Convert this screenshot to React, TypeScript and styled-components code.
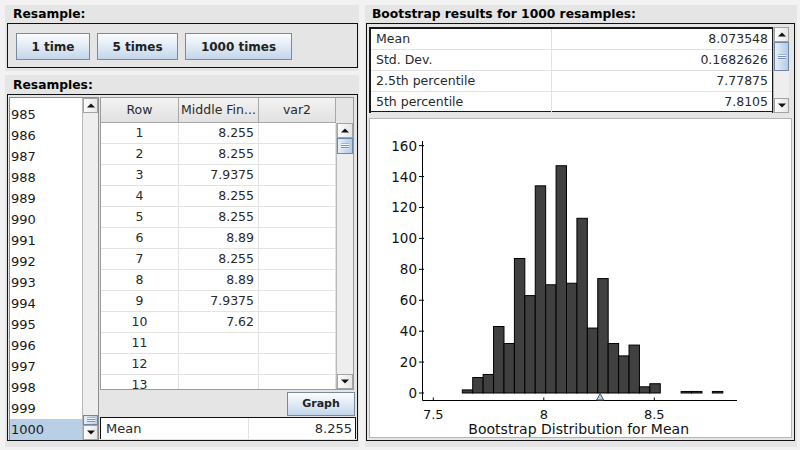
import React from "react";
import styled, { createGlobalStyle } from "styled-components";

const GlobalStyle = createGlobalStyle`
    html, body {
        margin: 0;
        padding: 0;
        background: #f2f2f2;
    }
    body {
        font-family: "DejaVu Sans", "Noto Sans", sans-serif;
        color: #000;
    }
`;

const Frame = styled.div`
    width: 800px;
    height: 450px;
    box-sizing: border-box;
    padding: 5px 3px 3px 5px;
    display: grid;
    grid-template-columns: 354px 432px;
    column-gap: 6px;
`;

const Column = styled.div`
    display: flex;
    flex-direction: column;
    gap: 4px;
    min-height: 0;
`;

const Panel = styled.section<{ $grow?: boolean; $padBottom: number; $padRight: number; $padLeft: number }>`
    background: #e5e5e5;
    display: flex;
    flex-direction: column;
    padding: 0 ${(p) => p.$padRight}px ${(p) => p.$padBottom}px ${(p) => p.$padLeft}px;
    flex: ${(p) => (p.$grow ? "1" : "none")};
    min-height: 0;
`;

const Title = styled.h2<{ $h: number }>`
    margin: 0;
    height: ${(p) => p.$h}px;
    line-height: ${(p) => p.$h + 1}px;
    padding-left: 6px;
    font-size: 12.3px;
    font-weight: bold;
`;

const ButtonBox = styled.div`
    border: 1px solid #111;
    padding: 9px 8px 7px 8px;
    display: flex;
    gap: 7px;
`;

const OceanButton = styled.button<{ $w: number; $h: number; $size: number }>`
    width: ${(p) => p.$w}px;
    height: ${(p) => p.$h}px;
    padding: 0;
    border: 1px solid #7a8a99;
    background: linear-gradient(#fbfcfe, #e3ecf6 45%, #c4d6ea);
    font-family: "DejaVu Sans", sans-serif;
    font-weight: bold;
    font-size: ${(p) => p.$size}px;
    color: #222;
`;

const ResampleBox = styled.div`
    flex: 1;
    min-height: 0;
    border: 1px solid #111;
    padding: 2px 1px 0 1px;
    display: grid;
    grid-template-columns: 90px 256px;
    column-gap: 1px;
`;

const ListPane = styled.div`
    border: 1px solid #8d8d8d;
    border-bottom: none;
    background: #fff;
    display: flex;
    min-height: 0;
`;

const ListItems = styled.div`
    flex: 1;
    display: flex;
    flex-direction: column;
    justify-content: flex-end;
    overflow: hidden;
`;

const ListItem = styled.div<{ $selected?: boolean }>`
    height: 21px;
    flex: none;
    line-height: 21px;
    padding-left: 1px;
    font-size: 13px;
    color: #1a1a1a;
    background: ${(p) => (p.$selected ? "#b8cfe5" : "transparent")};
`;

const ScrollWrap = styled.div<{ $w: number }>`
    width: ${(p) => p.$w}px;
    flex: none;
    display: flex;
    flex-direction: column;
    background: #eeeeee;
    border-left: 1px solid #b8b8b8;
`;

const ArrowBtn = styled.div`
    height: 15px;
    flex: none;
    box-sizing: border-box;
    border: 1px solid #a3a3a3;
    background: linear-gradient(to right, #fdfdfd, #e6e6e6);
    display: flex;
    align-items: center;
    justify-content: center;
`;

const Track = styled.div`
    flex: 1;
    position: relative;
`;

const Thumb = styled.div<{ $top?: number; $bottom?: number; $h: number }>`
    position: absolute;
    left: 0;
    right: 0;
    ${(p) => (p.$top !== undefined ? `top: ${p.$top}px;` : `bottom: ${p.$bottom}px;`)}
    height: ${(p) => p.$h}px;
    box-sizing: border-box;
    border: 1px solid #6f87a6;
    background: linear-gradient(to right, #e7eff8, #c9daee 55%, #b6cbe4);
    &::after {
        content: "";
        position: absolute;
        left: 50%;
        top: 50%;
        width: 8px;
        height: 5px;
        transform: translate(-50%, -50%);
        background: repeating-linear-gradient(to bottom, #6f8fc4 0 1px, #f4f8fc 1px 2px);
    }
`;

const Arrow = ({ down }: { down?: boolean }) => (
    <svg width="8" height="5" viewBox="0 0 8 5">
        <polygon points={down ? "0,0.5 8,0.5 4,4.5" : "0,4.5 8,4.5 4,0.5"} fill="#111" />
    </svg>
);

const ScrollBar = ({
    width,
    top,
    bottom,
    thumb,
}: {
    width: number;
    top?: number;
    bottom?: number;
    thumb: number;
}) => (
    <ScrollWrap $w={width}>
        <ArrowBtn>
            <Arrow />
        </ArrowBtn>
        <Track>
            <Thumb $top={top} $bottom={bottom} $h={thumb} />
        </Track>
        <ArrowBtn>
            <Arrow down />
        </ArrowBtn>
    </ScrollWrap>
);

const TableSide = styled.div`
    display: flex;
    flex-direction: column;
    min-height: 0;
`;

const DataTable = styled.div`
    height: 293px;
    flex: none;
    box-sizing: border-box;
    border: 1px solid #9a9a9a;
    background: #e5e5e5;
    display: flex;
    flex-direction: column;
    width: 254px;
`;

const HeaderRow = styled.div`
    height: 25px;
    flex: none;
    display: grid;
    grid-template-columns: 78px 80px 77px 1fr;
`;

const HeadCell = styled.div<{ $blank?: boolean }>`
    box-sizing: border-box;
    border-right: ${(p) => (p.$blank ? "none" : "1px solid #a8a8a8")};
    border-bottom: ${(p) => (p.$blank ? "none" : "1px solid #a8a8a8")};
    background: ${(p) => (p.$blank ? "#e5e5e5" : "linear-gradient(#f3f3f3, #e1e1e1)")};
    font-size: 12.5px;
    line-height: 24px;
    text-align: center;
    color: #2a2a2a;
    white-space: nowrap;
    overflow: hidden;
`;

const TableBody = styled.div`
    flex: 1;
    display: flex;
    min-height: 0;
`;

const Rows = styled.div`
    width: 235px;
    flex: none;
    background: #fff;
    overflow: hidden;
`;

const BodyRow = styled.div`
    height: 21px;
    display: grid;
    grid-template-columns: 78px 80px 77px;
`;

const Cell = styled.div<{ $align: "center" | "right" }>`
    box-sizing: border-box;
    border-right: 1px solid #e3e3e3;
    border-bottom: 1px solid #e3e3e3;
    font-size: 12.5px;
    line-height: 20px;
    text-align: ${(p) => p.$align};
    padding-right: ${(p) => (p.$align === "right" ? 4 : 0)}px;
    color: #2a2a2a;
`;

const GraphRow = styled.div`
    height: 27px;
    flex: none;
    display: flex;
    justify-content: flex-end;
    align-items: center;
    padding-right: 1px;
`;

const MeanBox = styled.div`
    height: 22px;
    box-sizing: border-box;
    border: 1px solid #111;
    border-bottom: none;
    background: #fff;
    display: grid;
    grid-template-columns: 148px 1fr;
    font-size: 13px;
    line-height: 21px;
    color: #2a2a2a;
`;

const MeanLabel = styled.div`
    padding-left: 5px;
    border-right: 1px solid #e3e3e3;
`;

const MeanValue = styled.div`
    text-align: right;
    padding-right: 3px;
`;

const ResultsBox = styled.div`
    flex: 1;
    border: 1px solid #111;
    padding: 3px 1px 2px 2px;
    display: flex;
    flex-direction: column;
    gap: 5px;
    min-height: 0;
`;

const StatsPane = styled.div`
    height: 86px;
    flex: none;
    display: flex;
    width: 420px;
`;

const StatsTable = styled.div`
    flex: 1;
    border: 2px solid #1a1a1a;
    border-right-width: 1px;
    background: #fff;
`;

const StatRow = styled.div`
    height: 21px;
    display: grid;
    grid-template-columns: 181px 1fr;
`;

const StatCell = styled.div<{ $right?: boolean }>`
    box-sizing: border-box;
    border-bottom: 1px solid #e3e3e3;
    border-right: ${(p) => (p.$right ? "none" : "1px solid #e3e3e3")};
    font-size: 12.5px;
    line-height: 20px;
    color: #2a2a2a;
    text-align: ${(p) => (p.$right ? "right" : "left")};
    padding: 0 4px 0 5px;
`;

const ChartPanel = styled.div`
    flex: 1;
    border: 1px solid #b5b5b5;
    background: #fff;
    min-height: 0;
    width: 421px;
`;

const rowsData = ["8.255", "8.255", "7.9375", "8.255", "8.255", "8.89", "8.255", "8.89", "7.9375", "7.62", "", "", ""];
const listData = Array.from({ length: 16 }, (_, i) => 985 + i);
const stats = [
    ["Mean", "8.073548"],
    ["Std. Dev.", "0.1682626"],
    ["2.5th percentile", "7.77875"],
    ["5th percentile", "7.8105"],
];
const counts = [2, 10, 12, 43, 32, 87, 63, 134, 70, 147, 71, 113, 42, 74, 32, 24, 31, 4, 6, 0, 0, 1, 1, 0, 1];

// chart geometry, in px of the white panel
const X0 = 63.3;
const PX_PER_UNIT = 221;
const BASE = 274;
const PX_PER_COUNT = 1.546;
const AXIS_Y = 281.5;
const AXIS_X = 52.5;
const xOf = (v: number) => X0 + (v - 7.5) * PX_PER_UNIT;
const yOf = (c: number) => BASE - c * PX_PER_COUNT;

const Histogram = () => (
    <svg width="421" height="319" viewBox="0 0 421 319" fontFamily="DejaVu Sans, sans-serif">
        {counts.map((c, i) =>
            c > 0 ? (
                <rect
                    key={i}
                    x={92.3 + i * 10.42}
                    y={yOf(c)}
                    width={10.42}
                    height={c * PX_PER_COUNT}
                    fill="#404040"
                    stroke="#000"
                    strokeWidth="1"
                />
            ) : null
        )}
        <line x1={AXIS_X} y1={22} x2={AXIS_X} y2={AXIS_Y} stroke="#000" />
        <line x1={AXIS_X} y1={AXIS_Y} x2={367} y2={AXIS_Y} stroke="#000" />
        {[0, 20, 40, 60, 80, 100, 120, 140, 160].map((v) => (
            <g key={v}>
                <line x1={49} y1={yOf(v)} x2={54} y2={yOf(v)} stroke="#000" />
                <text x={47} y={yOf(v) + 5} fontSize="13.5" textAnchor="end" fill="#111">
                    {v}
                </text>
            </g>
        ))}
        {[7.5, 8, 8.5].map((v) => (
            <g key={v}>
                <line x1={xOf(v)} y1={AXIS_Y - 3} x2={xOf(v)} y2={AXIS_Y} stroke="#000" />
                <text x={xOf(v)} y={299.5} fontSize="13" textAnchor="middle" fill="#111">
                    {v}
                </text>
            </g>
        ))}
        <polygon
            points={`${xOf(8.255)},${BASE + 0.5} ${xOf(8.255) - 3.5},${AXIS_Y - 0.5} ${xOf(8.255) + 3.5},${AXIS_Y - 0.5}`}
            fill="#b8cfe5"
            stroke="#44556a"
            strokeWidth="1"
        />
        <text x={208.7} y={315} fontSize="14" textAnchor="middle" fill="#111">
            Bootstrap Distribution for Mean
        </text>
    </svg>
);

export default function App() {
    return (
        <>
            <GlobalStyle />
            <Frame>
                <Column>
                    <Panel $padBottom={3} $padRight={1} $padLeft={2}>
                        <Title $h={18}>Resample:</Title>
                        <ButtonBox>
                            <OceanButton $w={74} $h={27} $size={12}>1 time</OceanButton>
                            <OceanButton $w={81} $h={27} $size={12}>5 times</OceanButton>
                            <OceanButton $w={107} $h={27} $size={12}>1000 times</OceanButton>
                        </ButtonBox>
                    </Panel>
                    <Panel $grow $padBottom={6} $padRight={1} $padLeft={2}>
                        <Title $h={19}>Resamples:</Title>
                        <ResampleBox>
                            <ListPane>
                                <ListItems>
                                    {listData.map((n) => (
                                        <ListItem key={n} $selected={n === 1000}>
                                            {n}
                                        </ListItem>
                                    ))}
                                </ListItems>
                                <ScrollBar width={15} bottom={0} thumb={10} />
                            </ListPane>
                            <TableSide>
                                <DataTable>
                                    <HeaderRow>
                                        <HeadCell>Row</HeadCell>
                                        <HeadCell>Middle Fin...</HeadCell>
                                        <HeadCell>var2</HeadCell>
                                        <HeadCell $blank />
                                    </HeaderRow>
                                    <TableBody>
                                        <Rows>
                                            {rowsData.map((v, i) => (
                                                <BodyRow key={i}>
                                                    <Cell $align="center">{i + 1}</Cell>
                                                    <Cell $align="right">{v}</Cell>
                                                    <Cell $align="right" />
                                                </BodyRow>
                                            ))}
                                        </Rows>
                                        <ScrollBar width={16} top={0} thumb={16} />
                                    </TableBody>
                                </DataTable>
                                <GraphRow>
                                    <OceanButton $w={68} $h={24} $size={11}>Graph</OceanButton>
                                </GraphRow>
                                <MeanBox>
                                    <MeanLabel>Mean</MeanLabel>
                                    <MeanValue>8.255</MeanValue>
                                </MeanBox>
                            </TableSide>
                        </ResampleBox>
                    </Panel>
                </Column>
                <Column>
                    <Panel $grow $padBottom={6} $padRight={2} $padLeft={1}>
                        <Title $h={18}>Bootstrap results for 1000 resamples:</Title>
                        <ResultsBox>
                            <StatsPane>
                                <StatsTable>
                                    {stats.map(([k, v]) => (
                                        <StatRow key={k}>
                                            <StatCell>{k}</StatCell>
                                            <StatCell $right>{v}</StatCell>
                                        </StatRow>
                                    ))}
                                </StatsTable>
                                <ScrollBar width={15} top={0} thumb={29} />
                            </StatsPane>
                            <ChartPanel>
                                <Histogram />
                            </ChartPanel>
                        </ResultsBox>
                    </Panel>
                </Column>
            </Frame>
        </>
    );
}
